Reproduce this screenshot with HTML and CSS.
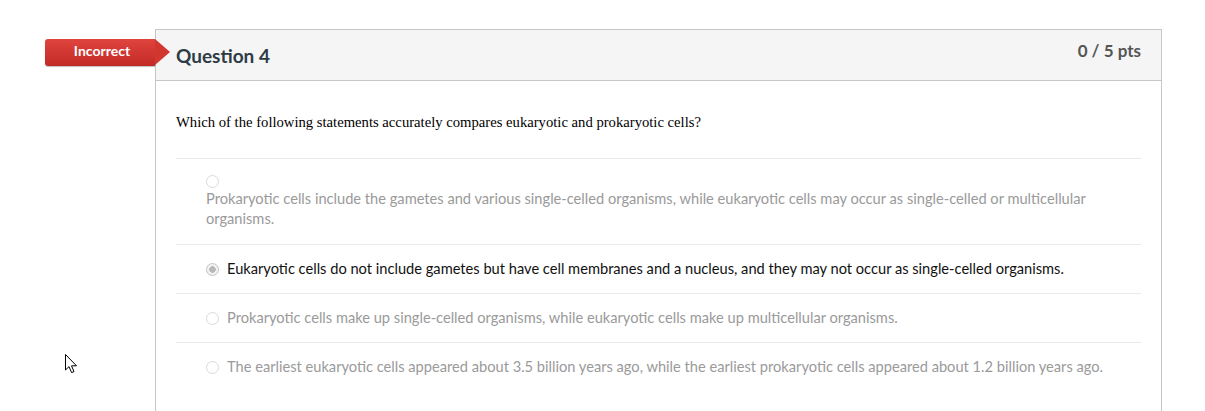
FILE: index.html
```html
<!DOCTYPE html>
<html>
<head>
<meta charset="utf-8">
<link rel="stylesheet" href="styles.css">
</head>
<body>
<div class="page">
  <div class="question">
    <div class="badge"><span>Incorrect</span></div>
    <div class="q-header">
      <h2 class="q-title">Question 4</h2>
      <div class="q-points">0 / 5 pts</div>
    </div>
    <div class="q-body">
      <p class="q-text">Which of the following statements accurately compares eukaryotic and prokaryotic cells?</p>
      <div class="answers">
        <div class="answer answer-stacked">
          <div class="radio-line"><span class="radio"></span></div>
          <div class="answer-text">Prokaryotic cells include the gametes and various single-celled organisms, while eukaryotic cells may occur as single-celled or multicellular organisms.</div>
        </div>
        <div class="answer selected">
          <span class="radio checked"></span>
          <span class="answer-text">Eukaryotic cells do not include gametes but have cell membranes and a nucleus, and they may not occur as single-celled organisms.</span>
        </div>
        <div class="answer">
          <span class="radio"></span>
          <span class="answer-text">Prokaryotic cells make up single-celled organisms, while eukaryotic cells make up multicellular organisms.</span>
        </div>
        <div class="answer">
          <span class="radio"></span>
          <span class="answer-text">The earliest eukaryotic cells appeared about 3.5 billion years ago, while the earliest prokaryotic cells appeared about 1.2 billion years ago.</span>
        </div>
      </div>
    </div>
  </div>
  <svg class="cursor" width="13" height="20" viewBox="0 0 13 20"><path d="M0.5 0.5 L0.5 16 L4 12.6 L6.6 18.6 L9 17.6 L6.5 11.8 L11.5 11.8 Z" fill="#fff" stroke="#000" stroke-width="1" stroke-linejoin="miter"/></svg>
</div>
</body>
</html>
```
FILE: styles.css
```css
html, body {
  margin: 0;
  padding: 0;
  background: #fff;
}
body {
  font-family: Lato, "Open Sans", sans-serif;
  width: 1205px;
  height: 411px;
  overflow: hidden;
}
.page {
  position: relative;
  padding: 29px 0 0 155px;
}
.question {
  position: relative;
  width: 1005px;
  border: 1px solid #c6c6c6;
  border-bottom: none;
  height: 400px;
}
.badge {
  position: absolute;
  left: -111px;
  top: 9px;
  width: 110px;
  height: 27px;
  background: linear-gradient(#e0443f, #c22a26);
  border-radius: 3px 0 0 3px;
  box-shadow: 0 1px 1px rgba(0,0,0,0.25);
  color: #fff;
  font-weight: 700;
  font-size: 14px;
  display: flex;
  align-items: center;
  justify-content: center;
  padding-left: 4px;
  box-sizing: border-box;
}
.badge::after {
  content: "";
  position: absolute;
  right: -15px;
  top: 0;
  border-left: 15px solid #d1362f;
  border-top: 13.5px solid transparent;
  border-bottom: 13.5px solid transparent;
}
.badge span {
  position: relative;
  top: -2px;
}
.q-header {
  background: #f5f5f5;
  border-bottom: 1px solid #c6c6c6;
  height: 50px;
  display: flex;
  justify-content: space-between;
  padding: 0 20px 0 20px;
}
.q-title {
  margin: 0;
  font-size: 19px;
  font-weight: 700;
  color: #2d3b45;
  padding-top: 14px;
  line-height: 24px;
}
.q-points {
  font-size: 17px;
  font-weight: 700;
  color: #555;
  padding-top: 11px;
  line-height: 20px;
}
.q-body {
  padding: 32px 20px 0 20px;
}
.q-text {
  margin: 0 0 26px 0;
  font-family: "Liberation Serif", "Times New Roman", serif;
  font-size: 14.67px;
  line-height: 19px;
  color: #000;
}
.answer {
  border-top: 1px solid #ebebeb;
  padding: 14px 0 14px 30px;
  font-size: 14.65px;
  line-height: 20px;
  color: #9a9a9a;
  display: flex;
  align-items: center;
}
.answer-stacked {
  display: block;
  padding-top: 14px;
  padding-bottom: 15px;
}
.radio-line {
  height: 16px;
  display: flex;
  align-items: center;
}
.answer.selected {
  color: #111;
}
.radio {
  display: inline-block;
  box-sizing: border-box;
  width: 13px;
  height: 13px;
  border-radius: 50%;
  border: 1px solid #dadada;
  background: #fff;
  flex: none;
  margin-right: 8px;
}
.radio.checked {
  border-color: #c4c4c4;
  background: radial-gradient(circle, #b8b8b8 0, #b8b8b8 3px, #f2f2f2 3.5px);
}
.cursor {
  position: absolute;
  left: 65px;
  top: 354px;
}
```
